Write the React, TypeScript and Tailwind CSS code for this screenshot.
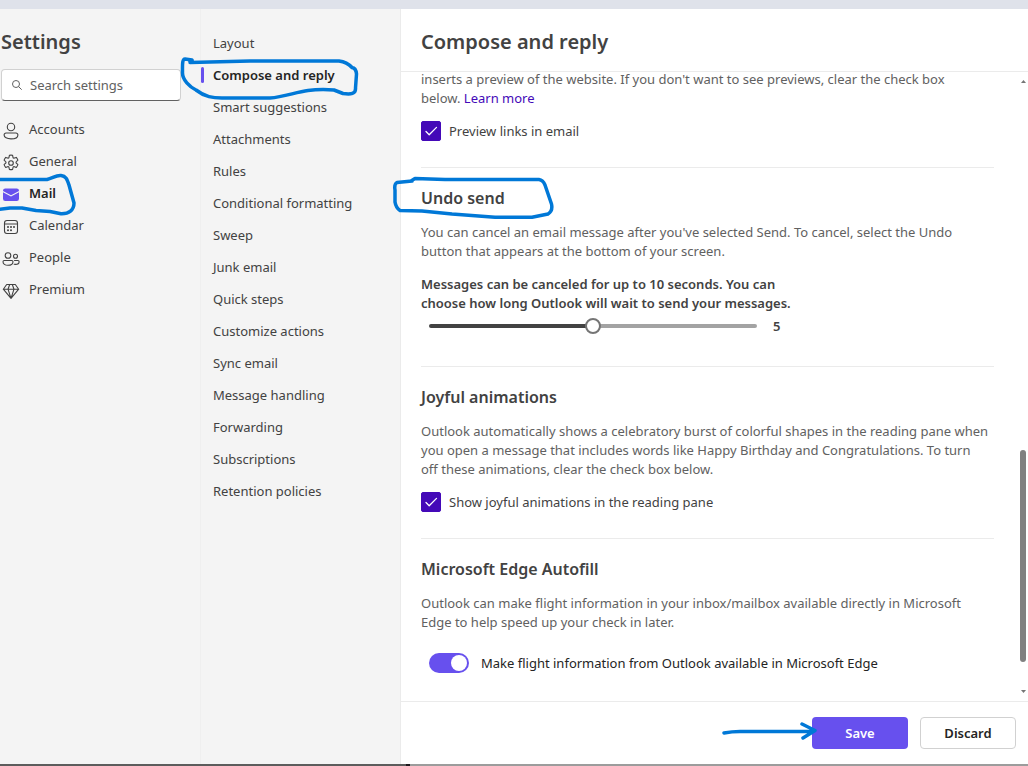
import React, { useState } from "react";
import clsx from "clsx";

const iconProps = {
	viewBox: "0 0 18 18",
	fill: "none",
	stroke: "currentColor",
	strokeWidth: 1.1,
	strokeLinecap: "round",
	strokeLinejoin: "round",
	className: "mt-1 size-[18px] shrink-0",
	"aria-hidden": true,
} as const;

const PersonIcon = () => (
	<svg {...iconProps}>
		<circle cx="9" cy="5" r="3.7" />
		<path d="M4 11h10a1.9 1.9 0 0 1 1.9 1.9c0 2.5-2.9 4-6.9 4s-6.9-1.500-6.900-4A1.900 1.900 0 0 1 4 11Z" />
	</svg>
);

const GearIcon = () => (
	<svg {...iconProps}>
		<circle cx="9" cy="9" r="2.300" />
		<path d="M7.400 1.300a8 8 0 0 1 3.200 0l.4 2c.1.600.8 1 1.400.8l1.900-.7a8 8 0 0 1 1.600 2.800l-1.500 1.400c-.5.4-.5 1.200 0 1.600l1.500 1.400a8 8 0 0 1-1.600 2.800l-1.900-.7c-.6-.2-1.300.2-1.400.8l-.4 2a8 8 0 0 1-3.200 0l-.4-2c-.1-.600-.8-1-1.400-.8l-1.900.7a8 8 0 0 1-1.600-2.800l1.500-1.400c.5-.4.5-1.200 0-1.600L2.100 6.200a8 8 0 0 1 1.600-2.800l1.900.7c.6.2 1.300-.2 1.400-.8l.4-2Z" />
	</svg>
);

const MailIcon = () => (
	<svg {...iconProps} className="mt-1 size-[18px] shrink-0 text-[#6750ee]">
		<path
			d="M1 6.200 9 10.400l8-4.200v6.500a2.300 2.300 0 0 1-2.300 2.300H3.300A2.300 2.300 0 0 1 1 12.700V6.200ZM3.300 2.500h11.400A2.300 2.300 0 0 1 17 4.800v.3L9 9.300 1 5.100v-.3a2.300 2.300 0 0 1 2.300-2.300Z"
			fill="currentColor"
			stroke="none"
		/>
	</svg>
);

const CalendarIcon = () => (
	<svg {...iconProps}>
		<rect x="2.500" y="2.500" width="13" height="13" rx="2.500" />
		<path d="M2.500 6h13" />
		<g fill="currentColor" stroke="none">
			<circle cx="9" cy="9" r="1" />
			<circle cx="12" cy="9" r="1" />
			<circle cx="6" cy="9" r="1" />
			<circle cx="6" cy="12.200" r="1" />
			<circle cx="9" cy="12.200" r="1" />
		</g>
	</svg>
);

const PeopleIcon = () => (
	<svg {...iconProps}>
		<circle cx="6" cy="5.500" r="2.800" />
		<circle cx="13.500" cy="6.300" r="2" />
		<path d="M2.200 10.500h7.600c.7 0 1.200.5 1.200 1.200 0 2.300-2 3.600-5 3.600s-5-1.300-5-3.600c0-.7.500-1.200 1.200-1.200ZM12.500 10.500h3.400c.7 0 1.200.5 1.200 1.200 0 1.700-1.400 2.700-3.600 2.700-.5 0-.9 0-1.300-.1" />
	</svg>
);

const DiamondIcon = () => (
	<svg {...iconProps}>
		<path d="M4.700 2.500h8.600L16.700 7.200 9 16.300 1.300 7.200 4.700 2.500ZM1.300 7.200h15.400M6 7.200 9 16.300l3-9.100M6 7.200l1.700-4.700M12 7.200l-1.700-4.700" />
	</svg>
);

const categories = [
	{ label: "Accounts", Icon: PersonIcon },
	{ label: "General", Icon: GearIcon },
	{ label: "Mail", Icon: MailIcon, active: true },
	{ label: "Calendar", Icon: CalendarIcon },
	{ label: "People", Icon: PeopleIcon },
	{ label: "Premium", Icon: DiamondIcon },
];

const pages = [
	"Layout",
	"Compose and reply",
	"Smart suggestions",
	"Attachments",
	"Rules",
	"Conditional formatting",
	"Sweep",
	"Junk email",
	"Quick steps",
	"Customize actions",
	"Sync email",
	"Message handling",
	"Forwarding",
	"Subscriptions",
	"Retention policies",
];

interface InkProps {
	viewBox: string;
	d: string;
	className: string;
}

// Hand-drawn blue marker stroke
const Ink = ({ viewBox, d, className }: InkProps) => (
	<svg
		viewBox={viewBox}
		className={clsx("pointer-events-none absolute z-10 max-w-none", className)}
		fill="none"
		stroke="#0078d7"
		strokeWidth="3.500"
		strokeLinecap="round"
		strokeLinejoin="round"
		aria-hidden
	>
		<path d={d} />
	</svg>
);

interface SectionProps {
	title: string;
	ink?: React.ReactNode;
	children: React.ReactNode;
}

const Section = ({ title, ink, children }: SectionProps) => (
	<section className="relative border-t border-[#ebebeb] pt-4 pb-[26px]">
		<h2 className="mb-2.5 text-[16px] leading-[29px] font-semibold">{title}</h2>
		{ink}
		{children}
	</section>
);

const Text = ({ children }: { children: React.ReactNode }) => (
	<p className="leading-[19px] text-[#616161]">{children}</p>
);

const Checkbox = ({ label }: { label: string }) => (
	<label className="mt-[13px] flex w-fit items-center gap-2">
		<span className="grid size-5">
			<input
				type="checkbox"
				defaultChecked
				className="peer col-start-1 row-start-1 size-5 appearance-none rounded-xs border border-[#4409b8] checked:bg-[#4409b8]"
			/>
			<svg
				viewBox="0 0 20 20"
				className="pointer-events-none invisible col-start-1 row-start-1 peer-checked:visible"
				fill="none"
				stroke="white"
				strokeWidth="1.300"
				strokeLinecap="round"
				strokeLinejoin="round"
				aria-hidden
			>
				<path d="m5 10.500 3.200 3.200L15.500 6.400" />
			</svg>
		</span>
		{label}
	</label>
);

const Sidebar = () => (
	<aside className="w-[200px] shrink-0">
		<h1 className="px-px pt-[17px] text-[20px] leading-8 font-semibold">Settings</h1>
		<label className="mt-[11px] mr-[19px] ml-px flex h-8 items-center gap-2 rounded border border-[#d1d1d1] border-b-[#616161] bg-white pl-2.5 text-[#616161]">
			<svg viewBox="0 0 10 10" className="size-2.5 shrink-0" fill="none" stroke="currentColor" aria-hidden>
				<circle cx="4" cy="4" r="3.500" />
				<path d="m6.500 6.500 3.200 3.200" />
			</svg>
			<input
				type="text"
				aria-label="Search settings"
				placeholder="Search settings"
				className="w-full min-w-0 bg-transparent outline-none placeholder:text-[#616161]"
			/>
		</label>
		<nav className="mt-3">
			<ul>
				{categories.map(({ label, Icon, active }) => (
					<li key={label} className="relative">
						<a
							href="#"
							className={clsx("flex h-8 items-center gap-[9px] pl-0.5", active && "font-semibold text-[#242424]")}
						>
							<Icon />
							{label}
						</a>
						{active && (
							<Ink
								viewBox="0 171 80 47"
								d="M-3 179.500H47C53 178 56 175 61 175.500C66 176 67 179 69 185L74 203C74 210 69 214 61 213.700L50 211.500L36 210.500L22 208H10L-3 209.500"
								className="-top-1.5 left-0 h-[47px] w-20"
							/>
						)}
					</li>
				))}
			</ul>
		</nav>
	</aside>
);

const PageList = () => (
	<nav className="w-[200px] shrink-0 border-l border-[#efefef] pt-[18px]">
		<ul>
			{pages.map((page) => {
				const active = page === "Compose and reply";
				return (
					<li key={page} className="relative">
						<a
							href="#"
							className={clsx("flex h-8 items-center pl-3", active && "font-semibold text-[#242424]")}
						>
							{active && <span className="absolute left-0 h-4 w-[3px] rounded-full bg-[#6750ee]" />}
							{page}
						</a>
						{active && (
							<Ink
								viewBox="178 55 184 48"
								d="M190 61.500L192 60L185 59C182 59 182.500 66 182.500 72C182 80 190 87 196 90C205 97 213 98 222 98H270C284 97 296 92 308 90.500Q320 89 334 90L343 93.500C351 94.500 356 94 355.500 88L356.500 74Q356 68 352 67.500Q347 62 339 61H250L190 62.500"
								className="-top-1 -left-[23px] h-12 w-[184px]"
							/>
						)}
					</li>
				);
			})}
		</ul>
	</nav>
);

const UndoSlider = () => {
	const [seconds, setSeconds] = useState(5);
	const done = `${seconds * 10}%`;

	return (
		<div className="mb-px flex h-[26px] items-center gap-4 pl-2">
			<input
				type="range"
				min={0}
				max={10}
				value={seconds}
				onChange={(e) => setSeconds(Number(e.target.value))}
				aria-label="Seconds to wait before sending"
				className="h-1 w-[328px] appearance-none rounded-full [&::-webkit-slider-thumb]:size-4 [&::-webkit-slider-thumb]:appearance-none [&::-webkit-slider-thumb]:rounded-full [&::-webkit-slider-thumb]:border-2 [&::-webkit-slider-thumb]:border-[#757575] [&::-webkit-slider-thumb]:bg-white"
				style={{ background: `linear-gradient(to right, #424242 ${done}, #a3a3a3 ${done})` }}
			/>
			<span className="font-semibold">{seconds}</span>
		</div>
	);
};

const Scrollbar = () => (
	<div className="flex w-[10px] shrink-0 flex-col items-center pt-2 pb-2" aria-hidden>
		<svg viewBox="0 0 5 3" className="h-[3px] w-[5px]" fill="#757575">
			<path d="M0 3 2.500 0 5 3Z" />
		</svg>
		<div className="flex-1" />
		<div className="h-[212px] w-1.5 rounded-full bg-[#808080]" />
		<svg viewBox="0 0 5 3" className="mt-7 h-[3px] w-[5px]" fill="#757575">
			<path d="M0 0h5L2.500 3Z" />
		</svg>
	</div>
);

const App = () => {
	return (
		<div className="flex h-screen flex-col overflow-hidden bg-[#f4f4f4] font-['Noto_Sans','Open_Sans',sans-serif] text-[13px] leading-5 text-[#424242]">
			<div className="h-[9px] shrink-0 bg-[#dfe2ea]" />
			<div className="flex min-h-0 flex-1">
				<Sidebar />
				<PageList />
				<main className="flex min-w-0 flex-1 flex-col border-l border-[#ebebeb] bg-white">
					<header className="border-b border-[#ebebeb] px-5 pt-[17px] pb-[13px]">
						<h1 className="text-[20px] leading-8 font-semibold">Compose and reply</h1>
					</header>

					<div className="flex min-h-0 flex-1">
						<div className="flex flex-1 flex-col justify-end pr-6 pl-5">
							<div className="pb-[26px]">
								<Text>
									inserts a preview of the website. If you don't want to see previews, clear the check box
									<br />
									below.{" "}
									<a href="#" className="text-[#4409b8]">
										Learn more
									</a>
								</Text>
								<Checkbox label="Preview links in email" />
							</div>

							<Section
								title="Undo send"
								ink={
									<Ink
										viewBox="391 174 166 48"
										d="M412 181L397 182.500Q394 184 395 190V202Q396 208 400 210.500L422 211L452 214L495 217.300H532L548 214Q553 211 551.500 204L545 185Q543 180 539 179.500H445L415 178.500L411 181"
										className="top-1.5 -left-[30px] h-12 w-[166px]"
									/>
								}
							>
								<Text>
									You can cancel an email message after you've selected Send. To cancel, select the Undo
									<br />
									button that appears at the bottom of your screen.
								</Text>
								<p className="mt-3.5 leading-[19px] font-semibold">
									Messages can be canceled for up to 10 seconds. You can
									<br />
									choose how long Outlook will wait to send your messages.
								</p>
								<UndoSlider />
							</Section>

							<Section title="Joyful animations">
								<Text>
									Outlook automatically shows a celebratory burst of colorful shapes in the reading pane when
									<br />
									you open a message that includes words like Happy Birthday and Congratulations. To turn
									<br />
									off these animations, clear the check box below.
								</Text>
								<Checkbox label="Show joyful animations in the reading pane" />
							</Section>

							<Section title="Microsoft Edge Autofill">
								<Text>
									Outlook can make flight information in your inbox/mailbox available directly in Microsoft
									<br />
									Edge to help speed up your check in later.
								</Text>
								<label className="mt-5 mb-px flex h-[22px] w-fit items-center gap-3 pl-2 text-[#242424]">
									<input
										type="checkbox"
										role="switch"
										defaultChecked
										className="h-5 w-10 appearance-none rounded-full bg-[#a3a3a3] p-0.5 before:block before:size-4 before:rounded-full before:bg-white checked:bg-[#6750ee] checked:before:translate-x-5"
									/>
									Make flight information from Outlook available in Microsoft Edge
								</label>
							</Section>
						</div>
						<Scrollbar />
					</div>

					<footer className="flex justify-end gap-3 border-t border-[#ebebeb] px-3 py-[15px] font-semibold">
						<div className="relative">
							<Ink
								viewBox="720 719 100 24"
								d="M724 733Q732 731.500 740 731.500H812M802 724L815 730.500L803 738"
								className="top-0.5 -left-[92px] h-6 w-[100px]"
							/>
							<button type="button" className="h-8 w-24 rounded bg-[#6750ee] text-white">
								Save
							</button>
						</div>
						<button type="button" className="h-8 w-24 rounded border border-[#d1d1d1] bg-white text-[#242424]">
							Discard
						</button>
					</footer>
				</main>
			</div>
			<div className="flex h-0.5 shrink-0">
				<div className="w-[406px] bg-[#5c5c5c]" />
				<div className="w-1 bg-[#1f1a1f]" />
				<div className="flex-1 bg-[#9c9c9c]" />
			</div>
		</div>
	);
};

export default App;
